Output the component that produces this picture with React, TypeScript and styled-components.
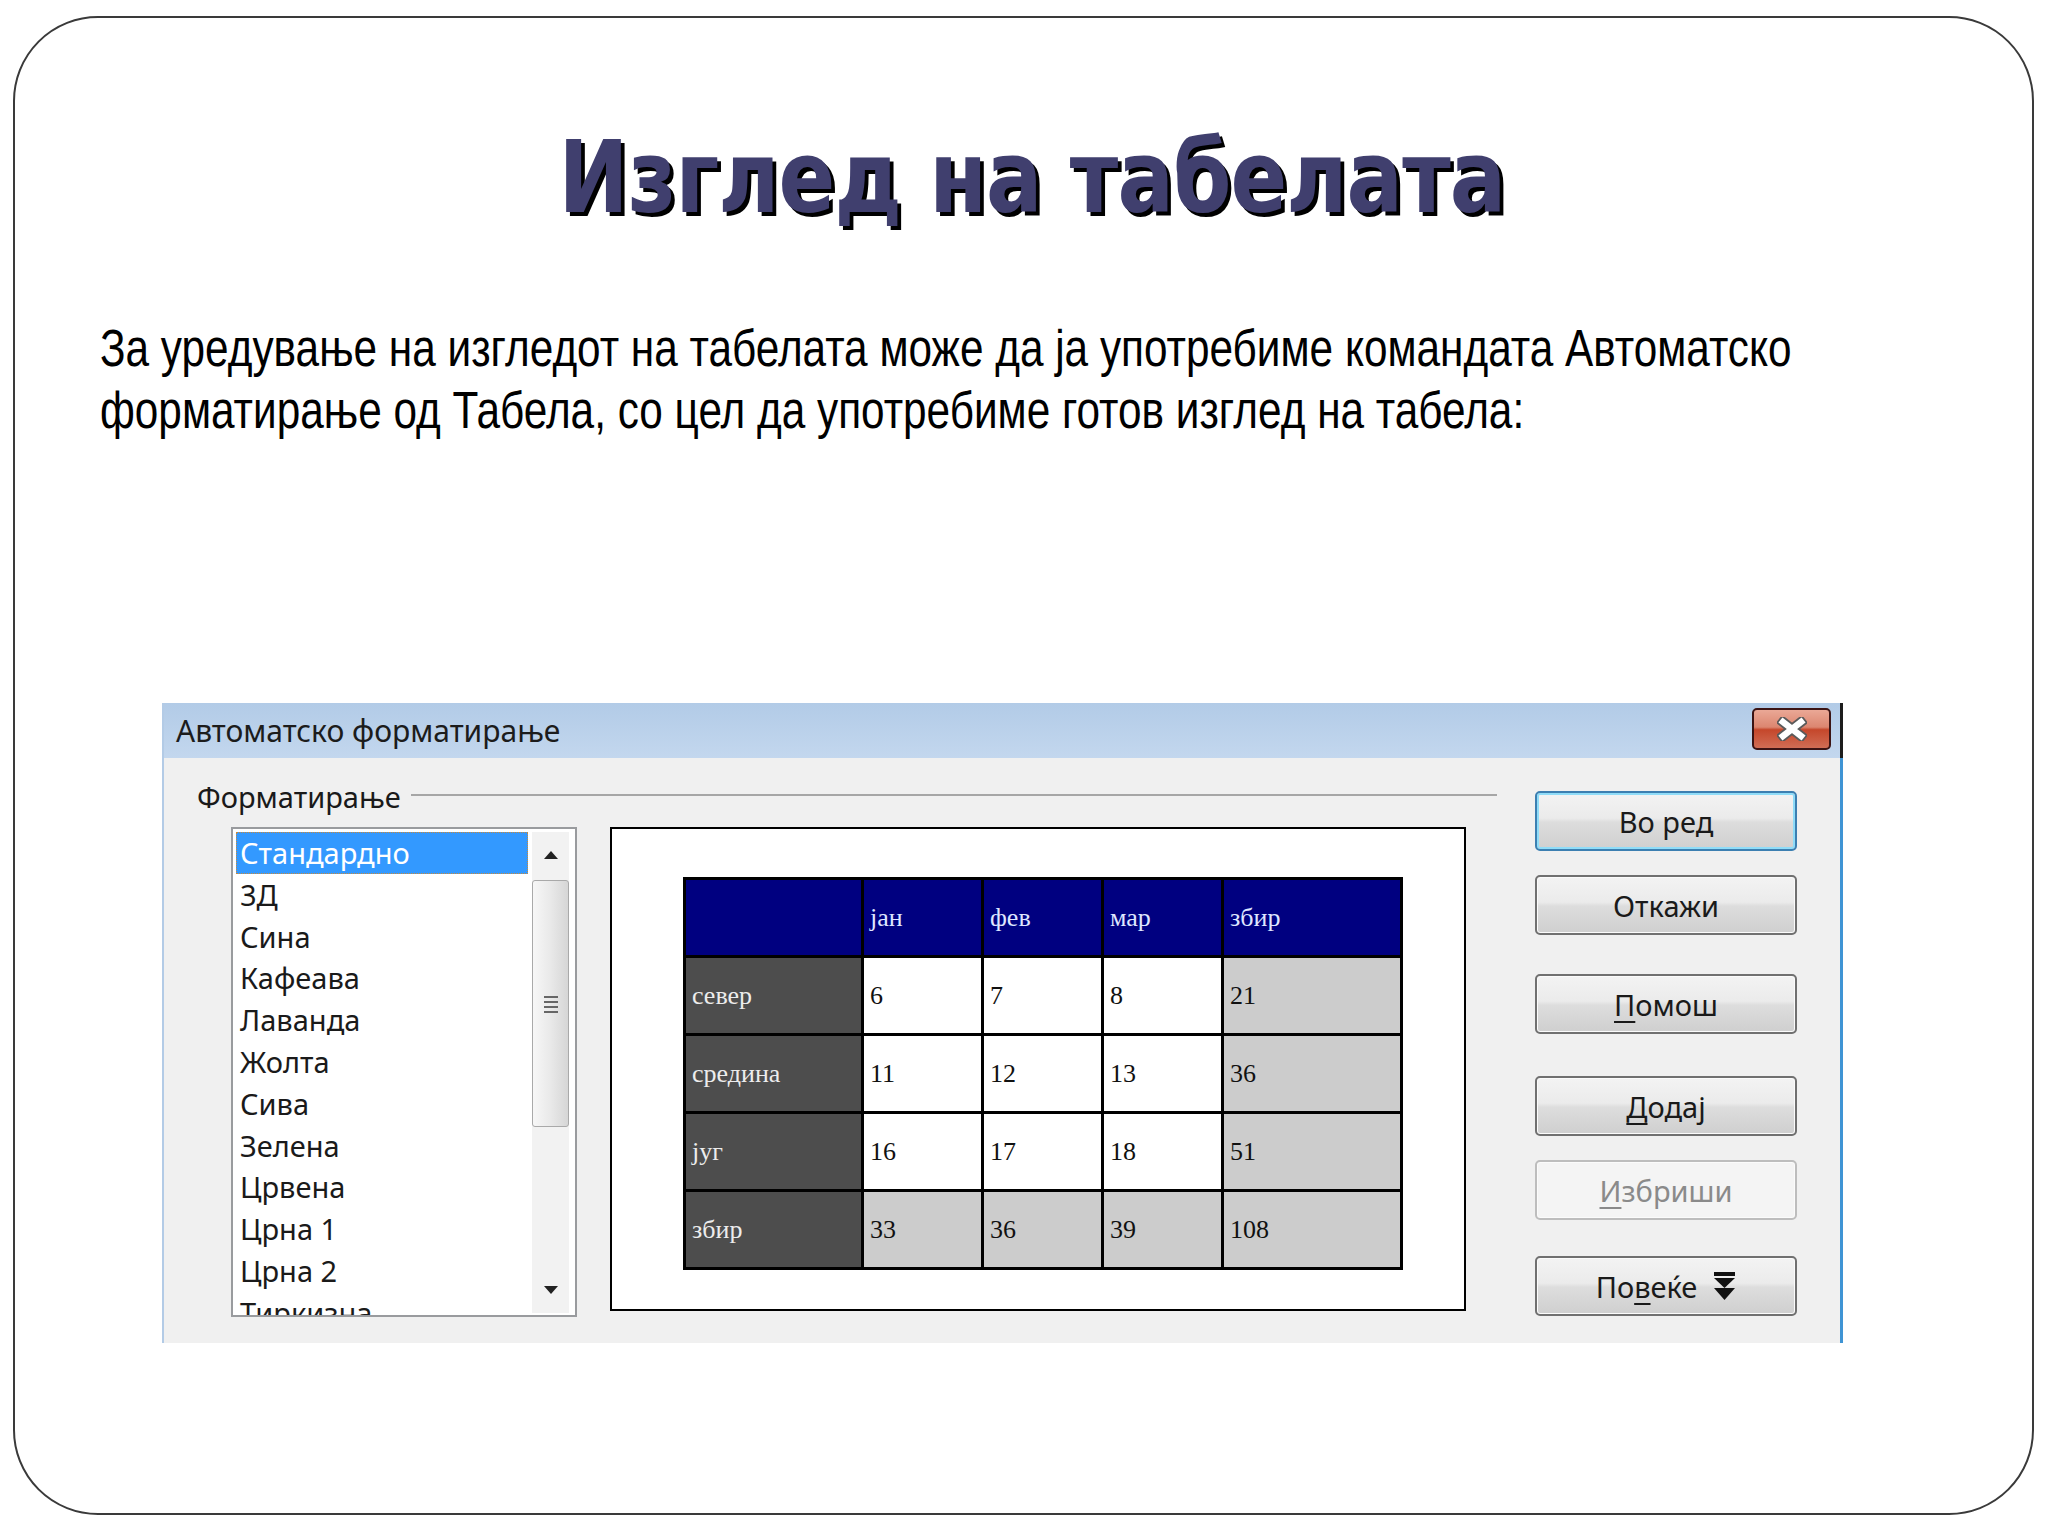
import React from "react";
import styled, { createGlobalStyle } from "styled-components";

const GlobalStyle = createGlobalStyle`
  html, body { margin: 0; padding: 0; background: #ffffff; }
  * { box-sizing: border-box; }
`;

const UI = `"Noto Sans", "Open Sans", "DejaVu Sans", sans-serif`;

const Slide = styled.div`
  margin: 16px 0 0 13px;
  width: 2021px;
  height: 1499px;
  border: 2px solid #3a3a3a;
  border-radius: 85px;
  display: flex;
  flex-direction: column;
  overflow: hidden;
`;

const Title = styled.h1`
  margin: 110px 0 0 16px;
  font-family: "DejaVu Sans Condensed", "DejaVu Sans", sans-serif;
  font-weight: bold;
  font-size: 100px;
  line-height: 100px;
  color: #403f6e;
  text-shadow: 4px 4px 0 #000;
  text-align: center;
  letter-spacing: -1px;
`;

const TitleInner = styled.span`
  display: inline-block;
  transform: scaleX(0.93);
  transform-origin: center;
`;

const Lead = styled.p`
  margin: 90px 0 0 0;
  padding-left: 85px;
  font-family: "Liberation Sans Narrow", "Liberation Sans", Arial, sans-serif;
  font-size: 51px;
  line-height: 62px;
  color: #000;
  white-space: nowrap;
`;

const LeadLine = styled.span`
  display: block;
  transform: scaleX(0.83);
  transform-origin: left center;
`;

const Dialog = styled.div`
  margin: 261px 0 0 147px;
  width: 1681px;
  height: 640px;
  display: flex;
  flex-direction: column;
  border-left: 2px solid #b3cbe6;
  font-family: ${UI};
  color: #1a1a1a;
`;

const TitleBar = styled.div`
  height: 55px;
  display: flex;
  align-items: flex-start;
  justify-content: space-between;
  padding: 0 9px 0 12px;
  background: linear-gradient(#b2cbe7, #c3d7ee);
  border-right: 3px solid #1d1d1d;
`;

const TitleText = styled.span`
  font-size: 30px;
  line-height: 55px;
  color: #1c1c1c;
`;

const CloseButton = styled.div`
  margin-top: 5px;
  width: 79px;
  height: 42px;
  border: 2px solid #3b1414;
  border-radius: 5px;
  background: linear-gradient(#eaa896 0%, #dc8670 45%, #c5472b 52%, #d06d55 100%);
  display: flex;
  align-items: center;
  justify-content: center;
`;

const DialogBody = styled.div`
  flex: 1;
  display: flex;
  background: #f0f0f0;
  border-right: 3px solid #3f94d4;
`;

const GroupArea = styled.div`
  width: 1333px;
  padding: 19px 0 0 33px;
`;

const GroupHeader = styled.div`
  display: flex;
  align-items: center;
  gap: 10px;
  height: 40px;
`;

const GroupLabel = styled.span`
  font-size: 29px;
  line-height: 40px;
`;

const GroupLine = styled.div`
  flex: 1;
  height: 2px;
  margin-top: -5px;
  background: #a6a6a6;
`;

const GroupContent = styled.div`
  display: flex;
  gap: 33px;
  margin: 10px 0 0 34px;
  align-items: flex-start;
`;

const ListBox = styled.div`
  width: 346px;
  height: 490px;
  border: 2px solid #999b9e;
  background: #ffffff;
  padding: 3px 6px 2px 3px;
  display: flex;
  overflow: hidden;
`;

const ListItems = styled.div`
  width: 292px;
  display: flex;
  flex-direction: column;
`;

const ListItem = styled.div<{ $selected?: boolean }>`
  flex: none;
  height: 41.8px;
  line-height: 41.8px;
  padding-left: 4px;
  font-size: 29px;
  white-space: nowrap;
  color: ${(p) => (p.$selected ? "#ffffff" : "#1a1a1a")};
  background: ${(p) => (p.$selected ? "#3399ff" : "transparent")};
  outline: ${(p) => (p.$selected ? "1px dotted #c88a3c" : "none")};
  outline-offset: -1px;
`;

const ScrollBar = styled.div`
  margin-left: 4px;
  width: 37px;
  height: 481px;
  background: #f2f2f2;
  display: flex;
  flex-direction: column;
`;

const ScrollArrow = styled.div`
  height: 46px;
  display: flex;
  align-items: center;
  justify-content: center;
`;

const ScrollThumb = styled.div`
  margin-top: 2px;
  height: 247px;
  border: 1px solid #a9a9a9;
  border-radius: 3px;
  background: linear-gradient(90deg, #f7f7f7 0%, #e9e9e9 50%, #d6d6d6 100%);
  display: flex;
  align-items: center;
  justify-content: center;
`;

const ScrollSpacer = styled.div`
  flex: 1;
`;

const Preview = styled.div`
  width: 856px;
  height: 484px;
  border: 2px solid #000;
  background: #ffffff;
  padding: 48px 0 0 71px;
`;

const SampleTable = styled.table`
  table-layout: fixed;
  width: 720px;
  border-collapse: separate;
  border-spacing: 3px;
  background: #000;
  font-family: "Liberation Serif", "Times New Roman", serif;
  font-size: 26px;
`;

type CellKind = "head" | "side" | "data" | "sum";

const cellBg: Record<CellKind, string> = {
  head: "#000080",
  side: "#4d4d4d",
  data: "#ffffff",
  sum: "#cccccc",
};
const cellFg: Record<CellKind, string> = {
  head: "#dfe6ff",
  side: "#ececec",
  data: "#111111",
  sum: "#111111",
};

const Cell = styled.td<{ $kind: CellKind }>`
  height: 75px;
  padding: 0 0 0 6px;
  vertical-align: middle;
  background: ${(p) => cellBg[p.$kind]};
  color: ${(p) => cellFg[p.$kind]};
  white-space: nowrap;
`;

const ButtonColumn = styled.div`
  margin-left: 38px;
  padding-top: 33px;
  width: 262px;
  display: flex;
  flex-direction: column;
`;

const Button = styled.div<{ $gap: number; $default?: boolean; $disabled?: boolean }>`
  margin-top: ${(p) => p.$gap}px;
  height: 60px;
  border: 2px solid ${(p) => (p.$default ? "#3c7fb1" : p.$disabled ? "#bdbdbd" : "#707070")};
  border-radius: 5px;
  background: ${(p) =>
    p.$disabled
      ? "#f4f4f4"
      : "linear-gradient(#f3f3f3 0%, #ebebeb 45%, #dddddd 52%, #cfcfcf 100%)"};
  box-shadow: ${(p) => (p.$default ? "inset 0 0 0 2px #8fdcf8" : "inset 0 0 0 1px #fbfbfb")};
  color: ${(p) => (p.$disabled ? "#8a8a8a" : "#1a1a1a")};
  font-size: 29px;
  display: flex;
  align-items: center;
  justify-content: center;
  gap: 16px;
`;

const Mnemonic = styled.span`
  text-decoration: underline;
  text-underline-offset: 5px;
  text-decoration-thickness: 2px;
`;

const items = [
  "Стандардно",
  "3Д",
  "Сина",
  "Кафеава",
  "Лаванда",
  "Жолта",
  "Сива",
  "Зелена",
  "Црвена",
  "Црна 1",
  "Црна 2",
  "Тиркизна",
];

const rows: { label: string; values: string[] }[] = [
  { label: "север", values: ["6", "7", "8", "21"] },
  { label: "средина", values: ["11", "12", "13", "36"] },
  { label: "југ", values: ["16", "17", "18", "51"] },
  { label: "збир", values: ["33", "36", "39", "108"] },
];

const CloseIcon = () => (
  <svg width="30" height="24" viewBox="0 0 30 24">
    <path d="M6 5 L24 19 M24 5 L6 19" stroke="#5a5a5a" strokeWidth="10" strokeLinecap="square" />
    <path d="M6 5 L24 19 M24 5 L6 19" stroke="#ffffff" strokeWidth="6.5" strokeLinecap="square" />
  </svg>
);

const UpArrow = () => (
  <svg width="14" height="8" viewBox="0 0 14 8">
    <polygon points="0,8 14,8 7,0" fill="#222" />
  </svg>
);

const DownArrow = () => (
  <svg width="14" height="8" viewBox="0 0 14 8">
    <polygon points="0,0 14,0 7,8" fill="#222" />
  </svg>
);

const Grip = () => (
  <svg width="14" height="18" viewBox="0 0 14 18">
    <rect x="0" y="1" width="14" height="2" fill="#666" />
    <rect x="0" y="6" width="14" height="2" fill="#666" />
    <rect x="0" y="11" width="14" height="2" fill="#666" />
    <rect x="0" y="16" width="14" height="2" fill="#666" />
  </svg>
);

const MoreIcon = () => (
  <svg width="23" height="29" viewBox="0 0 23 29">
    <rect x="1" y="0" width="21" height="4" fill="#111" />
    <polygon points="1,6 22,6 11.5,16" fill="#111" />
    <polygon points="1,16 22,16 11.5,28" fill="#111" />
  </svg>
);

export default function App() {
  return (
    <>
      <GlobalStyle />
      <Slide>
        <Title>
          <TitleInner>Изглед на табелата</TitleInner>
        </Title>
        <Lead>
          <LeadLine>
            За уредување на изгледот на табелата може да ја употребиме командата Автоматско
          </LeadLine>
          <LeadLine>форматирање од Табела, со цел да употребиме готов изглед на табела:</LeadLine>
        </Lead>
        <Dialog>
          <TitleBar>
            <TitleText>Автоматско форматирање</TitleText>
            <CloseButton>
              <CloseIcon />
            </CloseButton>
          </TitleBar>
          <DialogBody>
            <GroupArea>
              <GroupHeader>
                <GroupLabel>Форматирање</GroupLabel>
                <GroupLine />
              </GroupHeader>
              <GroupContent>
                <ListBox>
                  <ListItems>
                    {items.map((it, i) => (
                      <ListItem key={it} $selected={i === 0}>
                        {it}
                      </ListItem>
                    ))}
                  </ListItems>
                  <ScrollBar>
                    <ScrollArrow>
                      <UpArrow />
                    </ScrollArrow>
                    <ScrollThumb>
                      <Grip />
                    </ScrollThumb>
                    <ScrollSpacer />
                    <ScrollArrow>
                      <DownArrow />
                    </ScrollArrow>
                  </ScrollBar>
                </ListBox>
                <Preview>
                  <SampleTable>
                    <colgroup>
                      <col style={{ width: 175 }} />
                      <col style={{ width: 117 }} />
                      <col style={{ width: 117 }} />
                      <col style={{ width: 117 }} />
                      <col style={{ width: 176 }} />
                    </colgroup>
                    <tbody>
                      <tr>
                        <Cell $kind="head" />
                        <Cell $kind="head">јан</Cell>
                        <Cell $kind="head">фев</Cell>
                        <Cell $kind="head">мар</Cell>
                        <Cell $kind="head">збир</Cell>
                      </tr>
                      {rows.map((r, ri) => (
                        <tr key={r.label}>
                          <Cell $kind="side">{r.label}</Cell>
                          {r.values.map((v, vi) => (
                            <Cell
                              key={vi}
                              $kind={ri === rows.length - 1 || vi === r.values.length - 1 ? "sum" : "data"}
                            >
                              {v}
                            </Cell>
                          ))}
                        </tr>
                      ))}
                    </tbody>
                  </SampleTable>
                </Preview>
              </GroupContent>
            </GroupArea>
            <ButtonColumn>
              <Button $gap={0} $default>
                Во ред
              </Button>
              <Button $gap={24}>Откажи</Button>
              <Button $gap={39}>
                <span>
                  <Mnemonic>П</Mnemonic>омош
                </span>
              </Button>
              <Button $gap={42}>
                <span>
                  <Mnemonic>Д</Mnemonic>одај
                </span>
              </Button>
              <Button $gap={24} $disabled>
                <span>
                  <Mnemonic>И</Mnemonic>збриши
                </span>
              </Button>
              <Button $gap={36}>
                <span>
                  По<Mnemonic>в</Mnemonic>еќе
                </span>
                <MoreIcon />
              </Button>
            </ButtonColumn>
          </DialogBody>
        </Dialog>
      </Slide>
    </>
  );
}
